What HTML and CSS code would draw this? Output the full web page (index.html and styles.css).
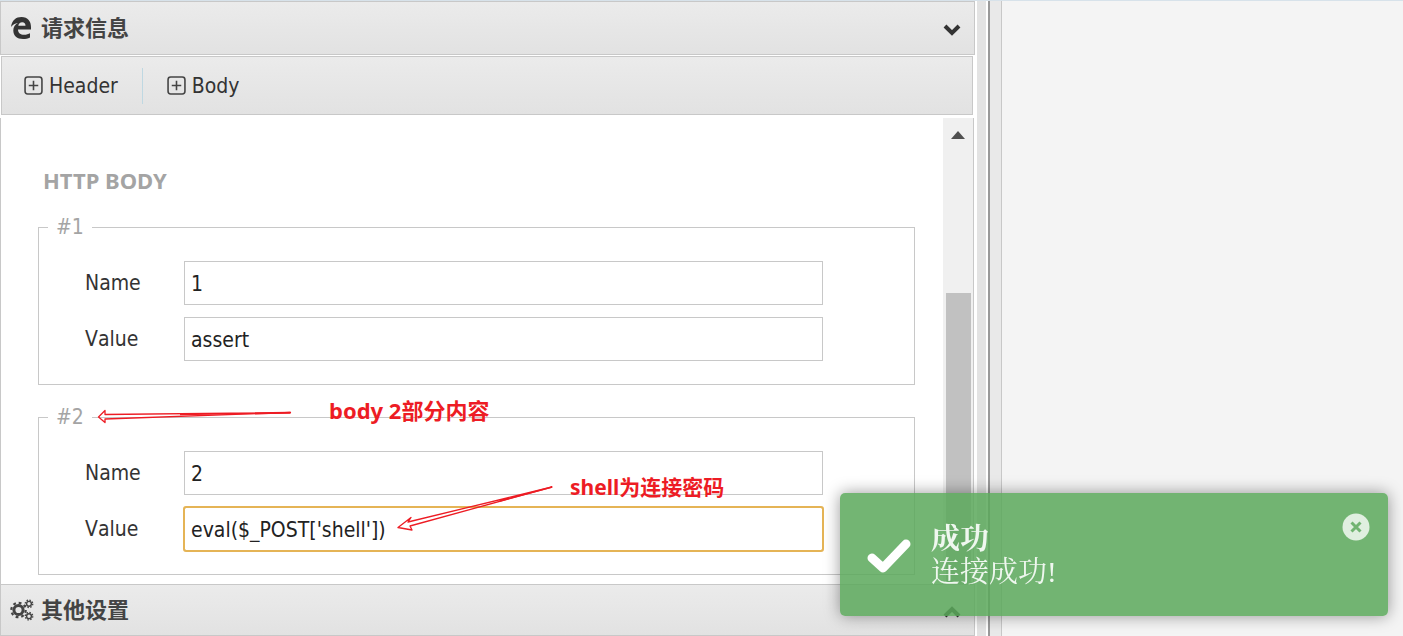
FILE: index.html
```html
<!DOCTYPE html>
<html lang="zh-CN">
<head>
<meta charset="utf-8">
<title>请求信息</title>
<link rel="stylesheet" href="styles.css">
</head>
<body>
<div class="app">
  <main class="left">
    <button class="bar" type="button">
      <svg class="bar-icon" viewBox="0 0 24 24" aria-hidden="true"><path fill="#333" d="M1 11C2 4 6 1 11.500 1C18 1 21 5.500 21 11V13.500H8C8 17 10.500 18.800 14 18.800C16.500 18.800 18.500 18 20 17.200V21.500C18 22.700 15.500 23 13 23C7 23 3.300 19.500 3.300 14.500C3.300 11 5 8.500 8 7C5 7.300 2.700 8.700 1 11ZM8.300 9.800H15.500C15.500 7.500 14.400 6.300 12.200 6.300C10 6.300 8.700 7.700 8.300 9.800Z"/></svg>
      <span class="bar-title">请求信息</span>
      <svg class="chev" viewBox="0 0 18 12" aria-hidden="true"><path d="M2 2l7 7 7-7" fill="none" stroke="#333" stroke-width="4"/></svg>
    </button>
    <div class="toolbar">
      <button class="tool" type="button"><svg class="plus" viewBox="0 0 18 18" aria-hidden="true"><rect x="1" y="1" width="16" height="16" rx="2.500"/><path d="M9 4.500v9M4.500 9h9"/></svg>Header</button>
      <span class="sep"></span>
      <button class="tool" type="button"><svg class="plus" viewBox="0 0 18 18" aria-hidden="true"><rect x="1" y="1" width="16" height="16" rx="2.500"/><path d="M9 4.500v9M4.500 9h9"/></svg>Body</button>
    </div>
    <div class="panel">
      <form class="form">
        <h2 class="title">HTTP BODY</h2>
        <fieldset class="group">
          <legend>#1</legend>
          <div class="row"><label for="n1">Name</label><input id="n1" type="text" value="1"></div>
          <div class="row"><label for="v1">Value</label><input id="v1" type="text" value="assert"></div>
        </fieldset>
        <fieldset class="group">
          <legend>#2</legend>
          <div class="row"><label for="n2">Name</label><input id="n2" type="text" value="2"></div>
          <div class="row"><label for="v2">Value</label><input class="active" id="v2" type="text" value="eval($_POST['shell'])"></div>
        </fieldset>
      </form>
      <div class="scroll"><svg class="up" viewBox="0 0 14 8" aria-hidden="true"><path d="M0 8L7 0l7 8z" fill="#505050"/></svg><span class="thumb"></span></div>
    </div>
    <button class="bar bar-last" type="button">
      <svg class="bar-icon" viewBox="0 0 24 22" aria-hidden="true"><g fill="none" stroke="#444"><circle cx="8.500" cy="11" r="4.600" stroke-width="3"/><circle cx="8.500" cy="11" r="7.200" stroke-width="2.200" stroke-dasharray="2.800 2.850"/><circle cx="19" cy="4.800" r="2.400" stroke-width="1.400"/><circle cx="19" cy="4.800" r="3.700" stroke-width="1.400" stroke-dasharray="1.500 1.400"/><circle cx="19" cy="17.200" r="2.400" stroke-width="1.400"/><circle cx="19" cy="17.200" r="3.700" stroke-width="1.400" stroke-dasharray="1.500 1.400"/></g></svg>
      <span class="bar-title">其他设置</span>
      <svg class="chev" viewBox="0 0 18 12" aria-hidden="true"><path d="M2 10l7-7 7 7" fill="none" stroke="#333" stroke-width="4"/></svg>
    </button>
  </main>
  <div class="splitter"></div>
  <aside class="right"></aside>
</div>

<svg class="arrows" width="560" height="540" aria-hidden="true"><g fill="none" stroke="#ed1c24" stroke-width="1.300" stroke-linejoin="round"><path d="M290.500 412.500L105 414.500L105 410.500L98.500 417L105 422.500V419Z"/><path d="M290.500 413L180 414.500"/><path d="M552 487L408 522L411 517.500L398 527.500L412 530L410 526Z"/><path d="M552 487L500 501"/></g></svg>
<p class="note note-body">body 2部分内容</p>
<p class="note note-shell">shell为连接密码</p>

<section class="toast" role="status">
  <svg class="check" viewBox="0 0 44 34" aria-hidden="true"><path d="M5 19l11 10L39 5" fill="none" stroke="#fff" stroke-width="9" stroke-linecap="round" stroke-linejoin="round"/></svg>
  <div class="message"><strong>成功</strong><span>连接成功!</span></div>
  <button class="close" type="button" aria-label="关闭"><svg viewBox="0 0 28 28"><circle cx="14" cy="14" r="13.500" fill="#e0efe0"/><path d="M9.500 9.500l9 9M18.500 9.500l-9 9" stroke="#72b472" stroke-width="3"/></svg></button>
</section>
</body>
</html>
```
FILE: styles.css
```css
* { box-sizing: border-box; }

body {
  margin: 0;
  font: 21px/28px "DejaVu Sans Condensed", "Noto Sans CJK SC", sans-serif;
  font-stretch: condensed;
  font-kerning: none;
  color: #333;
}

button { font: inherit; color: inherit; cursor: pointer; }

.app {
  display: flex;
  height: 100vh;
  border-top: 1px solid #d7e2ea;
  background: #fff;
}

.left {
  display: flex;
  flex-direction: column;
  width: 69.5%;
}

.bar {
  display: flex;
  align-items: center;
  flex: none;
  gap: 7px;
  width: 100%;
  height: 54px;
  padding: 0 13px 0 9px;
  border: 1px solid #c8c8c8;
  background: linear-gradient(#ebebeb, #e2e2e2);
}

.bar-last { height: 52px; }

.bar-icon { width: 24px; height: 24px; }

.bar-title {
  flex: 1;
  padding-bottom: 4px;
  text-align: left;
  font: bold 22px/28px "Noto Sans CJK SC", sans-serif;
  color: #444;
}

.chev { width: 18px; height: 12px; margin-top: 4px; }

.toolbar {
  display: flex;
  align-items: center;
  flex: none;
  height: 59px;
  margin: 1px 2px 3px 1px;
  padding: 0 22px;
  gap: 24px;
  border: 1px solid #c8c8c8;
  background: linear-gradient(#ebebeb, #e2e2e2);
}

.tool {
  display: flex;
  align-items: center;
  gap: 6px;
  padding: 0;
  border: 0;
  background: none;
}

.plus { width: 19px; height: 19px; fill: none; stroke: #444; stroke-width: 1.5; }

.sep { width: 1px; height: 36px; background: #bfd8e2; }

.panel {
  display: flex;
  flex: 1;
  min-height: 0;
  margin-right: 1px;
  border: solid #c8c8c8;
  border-width: 0 1px;
}

.form { flex: 1; padding: 48px 28px 0 37px; overflow: hidden; }

.title {
  margin: 0 0 19px 5px;
  font: bold 22px/28px "Noto Sans", sans-serif;
  color: #a4a4a4;
}

.group {
  min-width: 0;
  margin: 0 0 18px;
  padding: 20px 91px 23px 9px;
  border: 1px solid #c8c8c8;
}

.group legend { padding: 0 8px; color: #a4a4a4; }

.row { display: flex; align-items: center; height: 44px; }
.row + .row { margin-top: 12px; }
.row label { width: 136px; padding-left: 37px; }

.row input {
  flex: 1;
  min-width: 0;
  height: 44px;
  padding: 2px 6px 0;
  border: 1px solid #c8c8c8;
  background: #fff;
  font: inherit;
  color: #222;
}

.row .active {
  border-color: #e0a940;
  border-radius: 2px;
  outline: 2px solid #e5b456;
  outline-offset: -1px;
}

.scroll {
  display: flex;
  flex-direction: column;
  align-items: center;
  width: 30px;
  padding: 13px 2px 0;
  background: #f0f0f0;
}

.up { width: 14px; height: 8px; }
.thumb { flex: 1; width: 25px; margin-top: 154px; background: #c1c1c1; }

.splitter {
  width: 27px;
  border: solid #c8c8c8;
  border-width: 0 1px 0 0;
  background: linear-gradient(90deg, #fff 2px, #e3e3e3 2px, #e3e3e3 11px, #fff 11px, #fff 13px, #999 13px, #999 15px, #e9e9e9 15px);
}

.right { flex: 1; background: #f4f4f4; }

/* Annotations drawn over the form */
.arrows { position: absolute; left: 0; top: 0; pointer-events: none; }

.note {
  position: absolute;
  margin: 0;
  font: bold 21px/28px "Noto Sans", "Noto Sans CJK SC", sans-serif;
  color: #ed1c24;
}

.note-body { left: 329px; top: 396px; font-size: 22px; }
.note-shell { left: 570px; top: 473px; }

.toast {
  position: fixed;
  right: 15px;
  bottom: 20px;
  display: flex;
  align-items: center;
  gap: 20px;
  width: 548px;
  height: 123px;
  padding: 2px 18px 0 27px;
  border-radius: 5px;
  background: rgba(91, 168, 91, 0.85);
  box-shadow: 0 0 16px rgba(0, 0, 0, 0.4);
}

.check { width: 44px; height: 34px; }

.message {
  display: flex;
  flex: 1;
  flex-direction: column;
  font: 29px/33px "Liberation Serif", "Noto Serif CJK SC", "Noto Sans CJK SC", serif;
  color: #eff7ef;
}

.close {
  align-self: flex-start;
  width: 28px;
  height: 28px;
  margin-top: 18px;
  padding: 0;
  border: 0;
  background: none;
}

.close svg { display: block; }
```
